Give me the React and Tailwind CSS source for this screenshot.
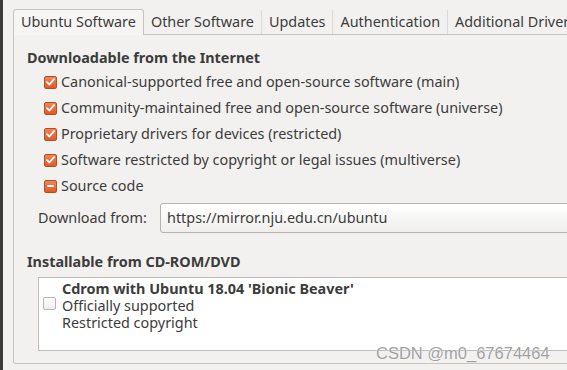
import React from 'react';

const font = { fontFamily: '"Noto Sans", "Open Sans", sans-serif' };

const Check = ({ state }) => (
    <span className="w-[13px] h-[13px] rounded-[2px] border border-[#b4501f] bg-gradient-to-b from-[#f08456] to-[#dd5a2a] flex items-center justify-center shrink-0">
        {state === 'checked' ? (
            <svg width="9" height="8" viewBox="0 0 9 8">
                <path d="M1 4.2 L3.4 6.5 L8 1.2" fill="none" stroke="#fff" strokeWidth="1.8" strokeLinecap="round" strokeLinejoin="round" />
            </svg>
        ) : (
            <span className="w-[7px] h-[2px] bg-white rounded-[1px]" />
        )}
    </span>
);

const sources = [
    { label: 'Canonical-supported free and open-source software (main)', state: 'checked' },
    { label: 'Community-maintained free and open-source software (universe)', state: 'checked' },
    { label: 'Proprietary drivers for devices (restricted)', state: 'checked' },
    { label: 'Software restricted by copyright or legal issues (multiverse)', state: 'checked' },
    { label: 'Source code', state: 'mixed' },
];

const tabs = ['Other Software', 'Updates', 'Authentication', 'Additional Drivers'];

export default function App() {
    return (
        <div className="w-[567px] h-[370px] overflow-hidden flex bg-[#f2f1f0] text-[#3c3c3c] text-[14.4px] relative" style={font}>
            <div className="w-[3px] bg-[#3c3b37] shrink-0" />

            <div className="flex-1 flex flex-col pl-[10px] pt-[9px] min-w-0">
                {/* Tab strip */}
                <div className="flex items-end h-[26px] w-[700px] shrink-0">
                    <div className="h-[26px] px-[7px] flex items-center border border-b-0 border-[#c6c4bf] rounded-t-[3px] bg-[#f6f5f4] leading-none">
                        Ubuntu Software
                    </div>
                    {tabs.map((t) => (
                        <div key={t} className="h-[26px] flex items-center border-b border-[#c6c4bf] whitespace-nowrap">
                            <span className="px-[7px] h-[24px] flex items-center border-r border-[#dcdad6]">{t}</span>
                        </div>
                    ))}
                    <div className="flex-1 h-[26px] border-b border-[#c6c4bf]" />
                </div>

                {/* Frame */}
                <div className="w-[700px] h-[329px] border border-t-0 border-[#c6c4bf] rounded-b-[3px] bg-[#f2f1f0] pl-[13px] pt-[14px] flex flex-col">
                    <div className="font-bold h-[18px] flex items-center">Downloadable from the Internet</div>
                    <div className="flex flex-col pl-[17px] pt-[2px]">
                        {sources.map((s) => (
                            <div key={s.label} className="h-[26px] flex items-center gap-[4px]">
                                <Check state={s.state} />
                                <span>{s.label}</span>
                            </div>
                        ))}
                    </div>

                    <div className="flex items-center pl-[11px] mt-[4px] h-[30px]">
                        <span className="w-[122px]">Download from:</span>
                        <div className="flex-1 h-[30px] rounded-[3px] border border-[#b5b3ae] bg-gradient-to-b from-white to-[#f0efee] flex items-center px-[6px]">
                            https://mirror.nju.edu.cn/ubuntu
                        </div>
                    </div>

                    <div className="font-bold h-[18px] flex items-center mt-[20px]">Installable from CD-ROM/DVD</div>

                    <div className="ml-[11px] mt-[6px] h-[74px] bg-white border border-[#bfbdb9] flex items-start pl-[4px] pt-[2px] gap-[6px]">
                        <span className="w-[13px] h-[13px] rounded-[2px] border border-[#b8b6b2] bg-gradient-to-b from-white to-[#efefef] shrink-0 mt-[17px]" />
                        <div className="flex flex-col">
                            <span className="font-bold h-[17px] leading-[17px]">Cdrom with Ubuntu 18.04 'Bionic Beaver'</span>
                            <span className="h-[17px] leading-[17px]">Officially supported</span>
                            <span className="h-[17px] leading-[17px]">Restricted copyright</span>
                        </div>
                    </div>
                </div>
            </div>

            {/* watermark */}
            <div
                className="absolute left-[376px] top-[341px] text-[16.5px] text-[#a0a0a0] whitespace-nowrap"
                style={{ fontFamily: '"Liberation Sans", sans-serif', textShadow: '0 0 1px #fff, 0 0 1px #fff' }}
            >
                CSDN @m0_67674464
            </div>
        </div>
    );
}
